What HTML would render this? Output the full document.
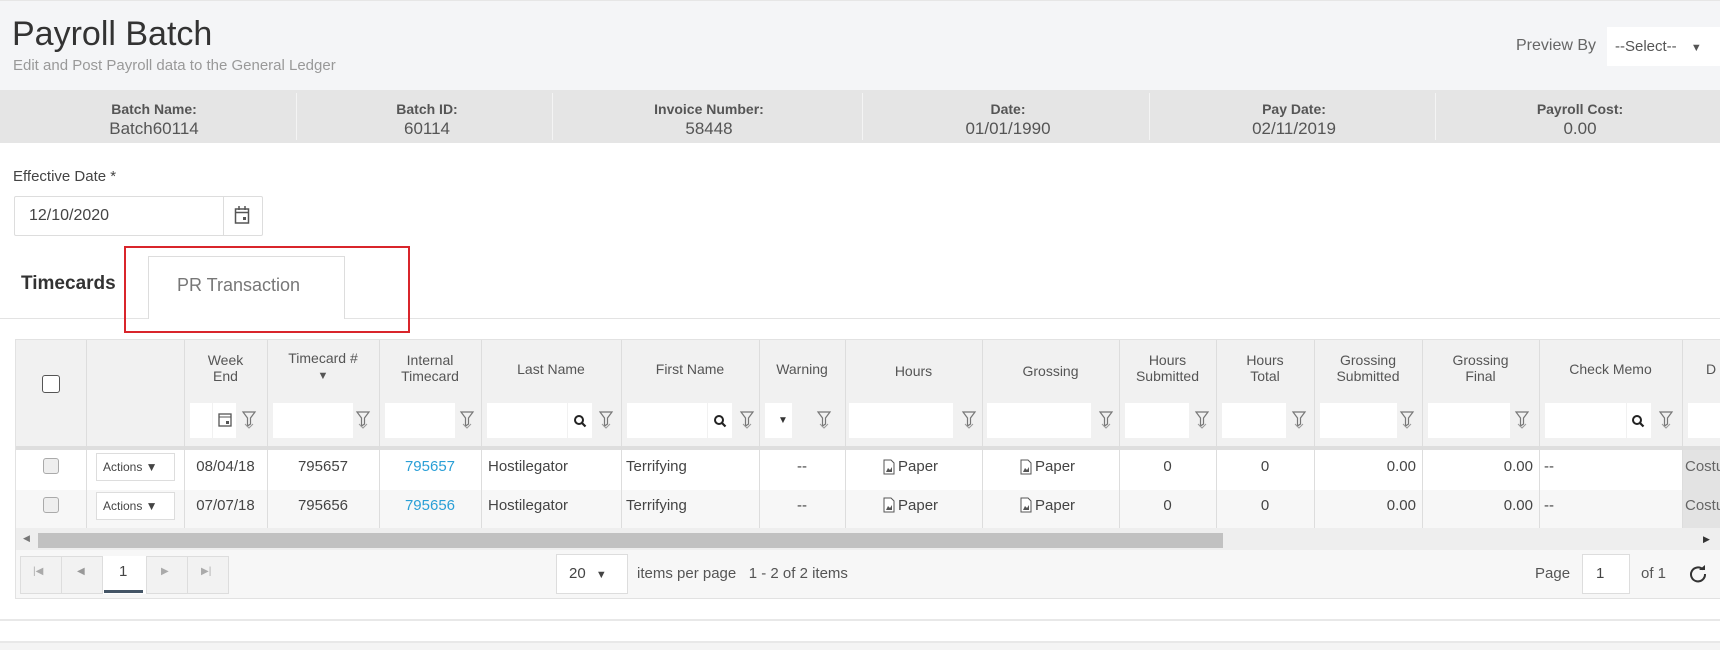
<!DOCTYPE html><html><head><meta charset="utf-8"><style>
*{box-sizing:border-box;margin:0;padding:0}
body{width:1720px;height:650px;overflow:hidden;background:#fff;font-family:"Liberation Sans",sans-serif;color:#333;position:relative}
.a{position:absolute}
.hd{font-size:14px;color:#555;text-align:center;line-height:16px}
.c{font-size:15px;color:#444}
.in{position:absolute;background:#fff;height:35px;top:368px}
.vl{position:absolute;width:1px;background:#ddd}
.bl{position:absolute;width:300px;text-align:center}
</style></head><body>
<div class="a" style="left:0;top:0;width:1720px;height:90px;background:#f4f5f7;border-top:1px solid #e6e6e6"></div>
<div class="a" style="left:12px;top:15px;font-size:34px;color:#333;font-weight:300">Payroll Batch</div>
<div class="a" style="left:13px;top:57px;font-size:15px;color:#999">Edit and Post Payroll data to the General Ledger</div>
<div class="a" style="left:1516px;top:37px;font-size:16px;color:#666">Preview By</div>
<div class="a" style="left:1607px;top:27px;width:113px;height:39px;background:#fff;font-size:15px;color:#555;padding:11px 8px">--Select-- <span style="margin-left:10px;font-size:11px">▼</span></div>
<div class="a" style="left:0;top:90px;width:1720px;height:53px;background:#e5e5e5"></div>
<div class="a" style="left:296px;top:93px;width:1px;height:47px;background:#f4f4f4"></div>
<div class="a" style="left:552px;top:93px;width:1px;height:47px;background:#f4f4f4"></div>
<div class="a" style="left:862px;top:93px;width:1px;height:47px;background:#f4f4f4"></div>
<div class="a" style="left:1149px;top:93px;width:1px;height:47px;background:#f4f4f4"></div>
<div class="a" style="left:1435px;top:93px;width:1px;height:47px;background:#f4f4f4"></div>
<div class="a" style="left:0;top:101px;width:1720px;font-size:14px;color:#555;font-weight:bold">
<span class="bl" style="left:4px">Batch Name:</span>
<span class="bl" style="left:277px">Batch ID:</span>
<span class="bl" style="left:559px">Invoice Number:</span>
<span class="bl" style="left:858px">Date:</span>
<span class="bl" style="left:1144px">Pay Date:</span>
<span class="bl" style="left:1430px">Payroll Cost:</span></div>
<div class="a" style="left:0;top:119px;width:1720px;font-size:17px;color:#555">
<span class="bl" style="left:4px">Batch60114</span>
<span class="bl" style="left:277px">60114</span>
<span class="bl" style="left:559px">58448</span>
<span class="bl" style="left:858px">01/01/1990</span>
<span class="bl" style="left:1144px">02/11/2019</span>
<span class="bl" style="left:1430px">0.00</span></div>
<div class="a" style="left:13px;top:168px;font-size:15px;color:#444">Effective Date *</div>
<div class="a" style="left:14px;top:196px;width:249px;height:40px;border:1px solid #ddd;border-radius:2px"></div>
<div class="a" style="left:223px;top:197px;width:1px;height:38px;background:#ddd"></div>
<div class="a" style="left:29px;top:207px;font-size:16px;color:#444">12/10/2020</div>
<svg class="a" style="left:234px;top:205px" width="16" height="20" viewBox="0 0 16 20"><rect x="1.5" y="4" width="13" height="14" fill="none" stroke="#555" stroke-width="1.5"/><line x1="1.5" y1="7.5" x2="14.5" y2="7.5" stroke="#555" stroke-width="1.5"/><line x1="5" y1="1" x2="5" y2="5" stroke="#555" stroke-width="1.5"/><line x1="11" y1="1" x2="11" y2="5" stroke="#555" stroke-width="1.5"/><rect x="9" y="12" width="3" height="3" fill="#555"/></svg>
<div class="a" style="left:0;top:318px;width:1720px;height:1px;background:#e3e3e3"></div>
<div class="a" style="left:21px;top:273px;font-size:19px;font-weight:bold;color:#333">Timecards</div>
<div class="a" style="left:148px;top:256px;width:197px;height:63px;border:1px solid #ddd;border-bottom:none;background:#fff"></div>
<div class="a" style="left:177px;top:275px;font-size:18px;color:#777">PR Transaction</div>
<div class="a" style="left:124px;top:246px;width:286px;height:87px;border:2px solid #d9252b"></div>
<div class="a" style="left:15px;top:339px;width:1705px;height:260px;border:1px solid #e2e2e2"></div>
<div class="a" style="left:16px;top:340px;width:1704px;height:106px;background:#f1f1f1"></div>
<div class="a" style="left:16px;top:446px;width:1704px;height:4px;background:#dedede"></div>
<div class="a" style="left:16px;top:490px;width:1704px;height:38px;background:#f7f7f7"></div>
<div class="a" style="left:16px;top:528px;width:1704px;height:22px;background:#eee"></div>
<div class="a" style="left:38px;top:533px;width:1185px;height:15px;background:#c1c1c1"></div>
<div class="a" style="left:23px;top:533px;font-size:9px;color:#777">◀</div>
<div class="a" style="left:1703px;top:534px;font-size:9px;color:#333">▶</div>
<div class="a" style="left:1683px;top:450px;width:37px;height:78px;background:#e3e3e3"></div>
<div class="a" style="left:0;top:0">
<div class="vl" style="left:86px;top:340px;height:188px"></div><div class="vl" style="left:184px;top:340px;height:188px"></div><div class="vl" style="left:267px;top:340px;height:188px"></div><div class="vl" style="left:379px;top:340px;height:188px"></div><div class="vl" style="left:481px;top:340px;height:188px"></div><div class="vl" style="left:621px;top:340px;height:188px"></div><div class="vl" style="left:759px;top:340px;height:188px"></div><div class="vl" style="left:845px;top:340px;height:188px"></div><div class="vl" style="left:982px;top:340px;height:188px"></div><div class="vl" style="left:1119px;top:340px;height:188px"></div><div class="vl" style="left:1216px;top:340px;height:188px"></div><div class="vl" style="left:1314px;top:340px;height:188px"></div><div class="vl" style="left:1422px;top:340px;height:188px"></div><div class="vl" style="left:1539px;top:340px;height:188px"></div><div class="vl" style="left:1682px;top:340px;height:188px"></div>
</div>
<div class="a" style="left:42px;top:375px;width:18px;height:18px;border:1.5px solid #555;border-radius:3px;background:#fff"></div>
<div class="hd a" style="left:184px;top:352px;width:83px">Week<br>End</div>
<div class="hd a" style="left:267px;top:350px;width:112px">Timecard #<br><span style="font-size:11px">▼</span></div>
<div class="hd a" style="left:379px;top:352px;width:102px">Internal<br>Timecard</div>
<div class="hd a" style="left:481px;top:361px;width:140px">Last Name</div>
<div class="hd a" style="left:621px;top:361px;width:138px">First Name</div>
<div class="hd a" style="left:759px;top:361px;width:86px">Warning</div>
<div class="hd a" style="left:845px;top:363px;width:137px">Hours</div>
<div class="hd a" style="left:982px;top:363px;width:137px">Grossing</div>
<div class="hd a" style="left:1119px;top:352px;width:97px">Hours<br>Submitted</div>
<div class="hd a" style="left:1216px;top:352px;width:98px">Hours<br>Total</div>
<div class="hd a" style="left:1314px;top:352px;width:108px">Grossing<br>Submitted</div>
<div class="hd a" style="left:1422px;top:352px;width:117px">Grossing<br>Final</div>
<div class="hd a" style="left:1539px;top:361px;width:143px">Check Memo</div>
<div class="hd a" style="left:1706px;top:361px">D</div>
<div class="in" style="left:190px;width:22px;top:403px"></div><div class="in" style="left:213px;width:23px;top:403px"></div>
<div class="in" style="left:273px;width:80px;top:403px"></div>
<div class="in" style="left:385px;width:70px;top:403px"></div>
<div class="in" style="left:487px;width:80px;top:403px"></div><div class="in" style="left:568px;width:24px;top:403px"></div>
<div class="in" style="left:627px;width:80px;top:403px"></div><div class="in" style="left:708px;width:24px;top:403px"></div>
<div class="in" style="left:765px;width:27px;top:403px;font-size:10px;padding:12px 0 0 13px">▼</div>
<div class="in" style="left:849px;width:104px;top:403px"></div>
<div class="in" style="left:987px;width:104px;top:403px"></div>
<div class="in" style="left:1125px;width:64px;top:403px"></div>
<div class="in" style="left:1222px;width:64px;top:403px"></div>
<div class="in" style="left:1320px;width:77px;top:403px"></div>
<div class="in" style="left:1428px;width:82px;top:403px"></div>
<div class="in" style="left:1545px;width:81px;top:403px"></div><div class="in" style="left:1627px;width:24px;top:403px"></div>
<div class="in" style="left:1688px;width:32px;top:403px"></div>
<svg class="a" style="left:0;top:0" width="1720" height="650">
<defs><g id="f"><path d="M0 0h12l-4.5 6v6l-3 2v-8z" fill="none" stroke="#777" stroke-width="1.2"/><path d="M2 12l4 4 4-4" fill="none" stroke="#999" stroke-width="1"/></g>
<g id="q"><circle cx="5" cy="5" r="4" fill="none" stroke="#222" stroke-width="2"/><line x1="8" y1="8" x2="11.5" y2="11.5" stroke="#222" stroke-width="2.2"/></g>
<g id="p"><path d="M1 0h7l3 3v11H1z" fill="#fff" stroke="#555"/><path d="M3 12l2-4 2 2 2-3v5z" fill="#555"/></g></defs>
<g transform="translate(243,412)"><use href="#f"/></g><g transform="translate(357,412)"><use href="#f"/></g><g transform="translate(461,412)"><use href="#f"/></g>
<g transform="translate(600,412)"><use href="#f"/></g><g transform="translate(741,412)"><use href="#f"/></g><g transform="translate(818,412)"><use href="#f"/></g>
<g transform="translate(963,412)"><use href="#f"/></g><g transform="translate(1100,412)"><use href="#f"/></g><g transform="translate(1196,412)"><use href="#f"/></g>
<g transform="translate(1293,412)"><use href="#f"/></g><g transform="translate(1401,412)"><use href="#f"/></g><g transform="translate(1516,412)"><use href="#f"/></g><g transform="translate(1660,412)"><use href="#f"/></g>
<g transform="translate(574,415)"><use href="#q"/></g><g transform="translate(714,415)"><use href="#q"/></g><g transform="translate(1632,415)"><use href="#q"/></g>
<g transform="translate(218,411)"><rect x="1" y="3" width="12" height="12" fill="none" stroke="#555" stroke-width="1.3"/><line x1="1" y1="6" x2="13" y2="6" stroke="#555"/><rect x="8" y="10" width="3" height="3" fill="#555"/></g>
<g transform="translate(883,460)"><use href="#p"/></g><g transform="translate(1020,460)"><use href="#p"/></g>
<g transform="translate(883,498)"><use href="#p"/></g><g transform="translate(1020,498)"><use href="#p"/></g>
</svg>
<div class="a c" style="left:0;top:458px;width:1720px">
<span class="a" style="left:43px;top:0;width:16px;height:16px;border:1px solid #aaa;border-radius:3px;background:#eee"></span>
<span class="a" style="left:96px;top:-5px;width:79px;height:28px;border:1px solid #ddd;font-size:12px;padding:6px 6px">Actions ▼</span>
<span class="a" style="left:184px;width:83px;text-align:center">08/04/18</span>
<span class="a" style="left:267px;width:112px;text-align:center">795657</span>
<span class="a" style="left:379px;width:102px;text-align:center;color:#2a9fd6">795657</span>
<span class="a" style="left:488px">Hostilegator</span><span class="a" style="left:626px">Terrifying</span>
<span class="a" style="left:759px;width:86px;text-align:center">--</span>
<span class="a" style="left:898px">Paper</span><span class="a" style="left:1035px">Paper</span>
<span class="a" style="left:1119px;width:97px;text-align:center">0</span><span class="a" style="left:1216px;width:98px;text-align:center">0</span>
<span class="a" style="left:1314px;width:102px;text-align:right">0.00</span><span class="a" style="left:1422px;width:111px;text-align:right">0.00</span>
<span class="a" style="left:1544px">--</span><span class="a" style="left:1685px;color:#666">Costu</span></div>
<div class="a c" style="left:0;top:497px;width:1720px">
<span class="a" style="left:43px;top:0;width:16px;height:16px;border:1px solid #aaa;border-radius:3px;background:#eee"></span>
<span class="a" style="left:96px;top:-5px;width:79px;height:28px;border:1px solid #ddd;background:#fff;font-size:12px;padding:6px 6px">Actions ▼</span>
<span class="a" style="left:184px;width:83px;text-align:center">07/07/18</span>
<span class="a" style="left:267px;width:112px;text-align:center">795656</span>
<span class="a" style="left:379px;width:102px;text-align:center;color:#2a9fd6">795656</span>
<span class="a" style="left:488px">Hostilegator</span><span class="a" style="left:626px">Terrifying</span>
<span class="a" style="left:759px;width:86px;text-align:center">--</span>
<span class="a" style="left:898px">Paper</span><span class="a" style="left:1035px">Paper</span>
<span class="a" style="left:1119px;width:97px;text-align:center">0</span><span class="a" style="left:1216px;width:98px;text-align:center">0</span>
<span class="a" style="left:1314px;width:102px;text-align:right">0.00</span><span class="a" style="left:1422px;width:111px;text-align:right">0.00</span>
<span class="a" style="left:1544px">--</span><span class="a" style="left:1685px;color:#666">Costu</span></div>
<div class="a" style="left:16px;top:550px;width:1704px;height:48px;background:#f7f7f7"></div>
<div class="a" style="left:20px;top:556px;width:209px;height:38px;border:1px solid #ddd;background:#f2f2f2"></div>
<div class="a" style="left:61px;top:556px;width:1px;height:38px;background:#ddd"></div><div class="a" style="left:102px;top:556px;width:1px;height:38px;background:#ddd"></div>
<div class="a" style="left:146px;top:556px;width:1px;height:38px;background:#ddd"></div><div class="a" style="left:187px;top:556px;width:1px;height:38px;background:#ddd"></div>
<div class="a" style="left:103px;top:556px;width:43px;height:38px;background:#fff"></div>
<div class="a" style="left:104px;top:590px;width:39px;height:3px;background:#456"></div>
<div class="a" style="left:33px;top:566px;font-size:10px;color:#aaa">|◀</div><div class="a" style="left:77px;top:566px;font-size:10px;color:#999">◀</div>
<div class="a" style="left:119px;top:563px;font-size:15px;color:#444">1</div>
<div class="a" style="left:161px;top:566px;font-size:10px;color:#aaa">▶</div><div class="a" style="left:201px;top:566px;font-size:10px;color:#aaa">▶|</div>
<div class="a" style="left:556px;top:554px;width:72px;height:40px;border:1px solid #ddd;background:#fff;font-size:15px;padding:10px 12px;color:#444">20 <span style="font-size:11px;margin-left:6px">▼</span></div>
<div class="a" style="left:637px;top:565px;font-size:15px;color:#555">items per page &nbsp; 1 - 2 of 2 items</div>
<div class="a" style="left:1535px;top:565px;font-size:15px;color:#555">Page</div>
<div class="a" style="left:1582px;top:554px;width:48px;height:40px;border:1px solid #ddd;background:#fff;font-size:15px;padding:10px 13px;color:#444">1</div>
<div class="a" style="left:1641px;top:565px;font-size:15px;color:#555">of 1</div>
<svg class="a" style="left:1688px;top:564px" width="20" height="20" viewBox="0 0 20 20"><path d="M15 5.5A7 7 0 1 0 17 10" fill="none" stroke="#333" stroke-width="2"/><path d="M11 4h6V-1z" fill="#333" transform="translate(0,2)"/></svg>
<div class="a" style="left:0;top:619px;width:1720px;height:2px;background:#e8e8e8"></div>
<div class="a" style="left:0;top:641px;width:1720px;height:9px;background:#f4f4f4;border-top:2px solid #e8e8e8"></div>
</body></html>
